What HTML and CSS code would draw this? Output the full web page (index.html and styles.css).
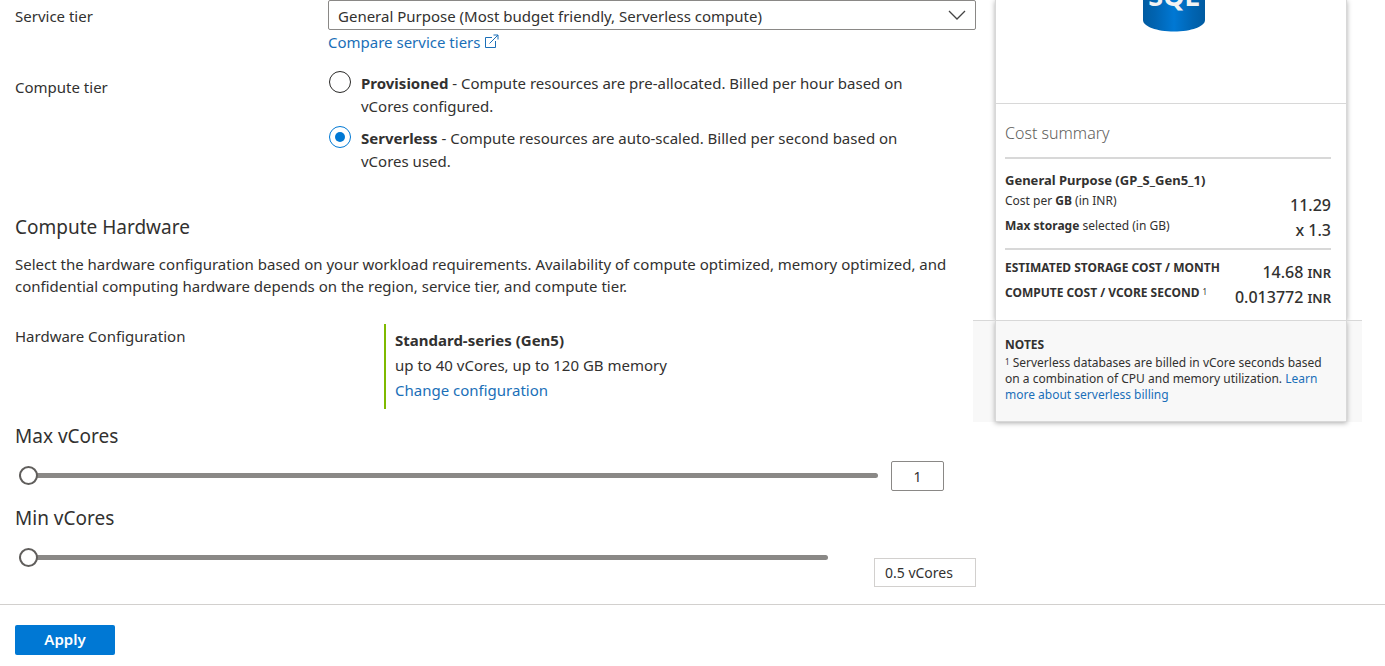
FILE: index.html
```html
<!DOCTYPE html>
<html lang="en">
<head>
<meta charset="utf-8">
<title>Compute and storage</title>
<link rel="stylesheet" href="styles.css">
</head>
<body>
<main class="layout">
  <form class="form" id="config">
    <div class="row">
      <label class="row-label" for="tier">Service tier</label>
      <div class="row-field">
        <div class="select">
          <select id="tier"><option>General Purpose (Most budget friendly, Serverless compute)</option></select>
          <svg class="chevron" viewBox="0 0 18 10" aria-hidden="true"><path d="M1 1l8 8 8-8"/></svg>
        </div>
        <a class="link compare" href="#">Compare service tiers
          <svg class="external" viewBox="0 0 15 15" aria-hidden="true"><path d="M8 3.5H1.5v10h10V7M5.500 9.500L14 1M9.500 1H14v4.500"/></svg></a>
      </div>
    </div>

    <div class="row" role="radiogroup" aria-labelledby="compute-label">
      <span class="row-label" id="compute-label">Compute tier</span>
      <div class="radios">
        <label class="radio"><input type="radio" name="compute"><span><b>Provisioned</b> - Compute resources are pre-allocated. Billed per hour based on vCores configured.</span></label>
        <label class="radio"><input type="radio" name="compute" checked><span><b>Serverless</b> - Compute resources are auto-scaled. Billed per second based on vCores used.</span></label>
      </div>
    </div>

    <h2 class="heading hardware-heading">Compute Hardware</h2>
    <p class="intro">Select the hardware configuration based on your workload requirements. Availability of compute optimized, memory optimized, and confidential computing hardware depends on the region, service tier, and compute tier.</p>

    <div class="hardware">
      <span class="hardware-label">Hardware Configuration</span>
      <div class="hardware-card">
        <b>Standard-series (Gen5)</b>
        <span>up to 40 vCores, up to 120 GB memory</span>
        <a class="link" href="#">Change configuration</a>
      </div>
    </div>

    <label class="heading slider-heading" for="max">Max vCores</label>
    <div class="slider-row max-row">
      <input class="slider" id="max" type="range" min="1" max="40" value="1">
      <input class="number" type="text" value="1" aria-label="Max vCores value">
    </div>

    <label class="heading slider-heading" for="min">Min vCores</label>
    <div class="slider-row min-row">
      <input class="slider" id="min" type="range" min="0" max="40" value="0">
      <output class="readout" for="min">0.5 vCores</output>
    </div>
  </form>

  <aside class="side">
    <div class="card">
      <div class="hero">
        <svg class="database" viewBox="0 0 64 86" role="img" aria-label="SQL database">
          <defs>
            <linearGradient id="body">
              <stop offset="0" stop-color="#005ba1"/>
              <stop offset=".2" stop-color="#0064b2"/>
              <stop offset=".5" stop-color="#0078d4"/>
              <stop offset=".8" stop-color="#0064b2"/>
              <stop offset="1" stop-color="#005ba1"/>
            </linearGradient>
          </defs>
          <path fill="url(#body)" d="M1 12v62c0 6.600 14 11.500 31 11.500S63 80.600 63 74V12z"/>
          <ellipse cx="32" cy="12" rx="31" ry="11.500" fill="#e8e8e8"/>
          <text class="database-text" x="32" y="60" text-anchor="middle">SQL</text>
        </svg>
      </div>
      <section class="summary">
        <h3 class="summary-title">Cost summary</h3>
        <h4 class="plan">General Purpose (GP_S_Gen5_1)</h4>
        <dl class="costs">
          <div class="cost"><dt>Cost per <b>GB</b> (in INR)</dt><dd>11.29</dd></div>
          <div class="cost"><dt><b>Max storage</b> selected (in GB)</dt><dd>x 1.3</dd></div>
        </dl>
        <dl class="costs totals">
          <div class="cost"><dt>ESTIMATED STORAGE COST / MONTH</dt><dd>14.68 <span class="unit">INR</span></dd></div>
          <div class="cost"><dt>COMPUTE COST / VCORE SECOND <sup>1</sup></dt><dd>0.013772 <span class="unit">INR</span></dd></div>
        </dl>
      </section>
    </div>
    <div class="notes-band">
      <section class="card notes">
        <h4 class="notes-title">NOTES</h4>
        <p class="notes-text"><sup>1</sup> Serverless databases are billed in vCore seconds based on a combination of CPU and memory utilization. <a class="link" href="#">Learn more about serverless billing</a></p>
      </section>
    </div>
  </aside>
</main>
<footer class="footer">
  <button class="apply" type="submit" form="config">Apply</button>
</footer>
</body>
</html>
```
FILE: styles.css
```css
* {
  box-sizing: border-box;
}

body {
  margin: 0;
  background: #fff;
  color: #323130;
  font: 15px/22px "Noto Sans", "Open Sans", sans-serif;
}

h2, h3, h4, p, dl, dd {
  margin: 0;
}

b {
  font-weight: 700;
}

sup {
  font-size: 8px;
  font-weight: 400;
  line-height: 0;
  vertical-align: 2px;
}

.link {
  color: #1a6fb8;
  text-decoration: none;
}

.layout {
  display: flex;
  align-items: flex-start;
}

.form {
  flex: 1;
  min-width: 0;
  padding: 0 0 17px 15px;
}

.row {
  display: grid;
  grid-template-columns: 313px 1fr;
  margin-bottom: 18px;
}

.row-label {
  padding-top: 5px;
}

.select {
  display: grid;
  align-items: center;
}

.select > * {
  grid-area: 1 / 1;
}

.select select {
  appearance: none;
  width: 100%;
  height: 30px;
  padding: 2px 40px 0 9px;
  border: 1px solid #8a8886;
  border-radius: 2px;
  background: #fff;
  color: inherit;
  font: inherit;
}

.chevron {
  justify-self: end;
  width: 18px;
  height: 10px;
  margin-right: 10px;
  fill: none;
  stroke: #444;
  stroke-width: 1.3;
  pointer-events: none;
}

.compare {
  display: block;
  padding-top: 1px;
}

.external {
  width: 15px;
  height: 15px;
  vertical-align: -1px;
  fill: none;
  stroke: #1a6fb8;
}

.radios {
  display: grid;
  gap: 8px;
  padding-right: 32px;
}

.radio {
  display: flex;
  gap: 10px;
  line-height: 23px;
}

.radio span {
  padding-top: 1px;
}

.radio input {
  appearance: none;
  flex: none;
  display: grid;
  place-items: center;
  width: 22px;
  height: 22px;
  margin: 0 0 0 1px;
  border: 1px solid #292827;
  border-radius: 50%;
}

.radio input:checked {
  border-color: #0078d4;
}

.radio input:checked::before {
  content: "";
  width: 10px;
  height: 10px;
  border-radius: 50%;
  background: #0078d4;
}

.heading {
  display: block;
  font-size: 19px;
  font-weight: 400;
  line-height: 26px;
}

.hardware-heading {
  margin: 41px 0 13px;
}

.hardware {
  display: grid;
  grid-template-columns: 369px 1fr;
  margin-top: 27px;
}

.hardware-label {
  padding-top: 1px;
}

.hardware-card {
  display: grid;
  justify-items: start;
  padding: 4px 0 6px 9px;
  border-left: 2px solid #7fba00;
  line-height: 25px;
}

.slider-heading {
  margin-top: 14px;
}

.slider-row {
  display: flex;
  align-items: flex-start;
  padding-left: 4px;
  margin-top: 12px;
}

.max-row {
  gap: 13px;
  padding-right: 32px;
}

.min-row {
  gap: 46px;
}

.slider {
  appearance: none;
  flex: 1;
  min-width: 0;
  height: 29px;
  margin: 0;
  background: none;
}

.slider::-webkit-slider-runnable-track {
  height: 5px;
  border-radius: 3px;
  background: #8a8886;
}

.slider::-webkit-slider-thumb {
  appearance: none;
  width: 19px;
  height: 19px;
  margin-top: -7px;
  border: 2px solid #605e5c;
  border-radius: 50%;
  background: #fff;
}

.number {
  width: 53px;
  height: 30px;
  padding: 0;
  border: 1px solid #8a8886;
  border-radius: 2px;
  color: inherit;
  font: inherit;
  font-size: 14px;
  text-align: center;
}

.readout {
  width: 102px;
  height: 29px;
  margin-top: 15px;
  padding: 3px 10px;
  border: 1px solid #d2d0ce;
  font-size: 14px;
}

.side {
  flex: none;
  width: 389px;
  margin: 0 23px 0 -3px;
  font-size: 12px;
}

.card {
  margin: 0 15px 0 22px;
  border: solid #d8d8d8;
  border-width: 0 1px;
  box-shadow: 0 1px 5px #aaa;
  clip-path: inset(0 -8px);
}

.hero {
  display: flex;
  justify-content: center;
  height: 104px;
  padding-left: 6px;
  border-bottom: 1px solid #d8d8d8;
}

.database {
  width: 64px;
  height: 86px;
  margin-top: -54px;
}

.database-text {
  fill: #f2f2f2;
  font-size: 27px;
  font-weight: 700;
}

.summary {
  padding: 16px 15px 13px 9px;
}

.summary-title {
  padding-bottom: 11px;
  border-bottom: 2px solid #d8d8d8;
  color: #605e5c;
  font-size: 16px;
  font-weight: 300;
  line-height: 26px;
}

.plan {
  padding-top: 11px;
  font-size: 13px;
  font-weight: 700;
  line-height: 20px;
}

.cost {
  display: flex;
  justify-content: space-between;
  line-height: 20px;
}

.cost dt {
  padding-top: 1px;
}

.cost dd {
  height: 25px;
  padding-top: 5px;
  font-size: 16px;
  font-weight: 500;
}

.totals {
  margin-top: 8px;
  padding-top: 7px;
  border-top: 2px solid #d8d8d8;
  font-weight: 700;
}

.unit {
  font-size: 13px;
  font-weight: 600;
}

.notes-band {
  border-top: 1px solid #d8d8d8;
  background: #f8f8f8;
}

.notes {
  padding: 14px 15px 18px 9px;
  border-bottom-width: 1px;
  background: #f8f8f8;
  clip-path: inset(0 -8px -8px);
}

.notes-title {
  font-size: 12px;
  font-weight: 700;
  line-height: 20px;
}

.notes-text {
  line-height: 16px;
}

.footer {
  padding: 20px 15px 11px;
  border-top: 1px solid #d2d0ce;
}

.apply {
  width: 100px;
  height: 30px;
  padding: 0 0 2px;
  border: 0;
  border-radius: 2px;
  background: #0078d4;
  color: #fff;
  font: inherit;
  font-weight: 600;
}
```
